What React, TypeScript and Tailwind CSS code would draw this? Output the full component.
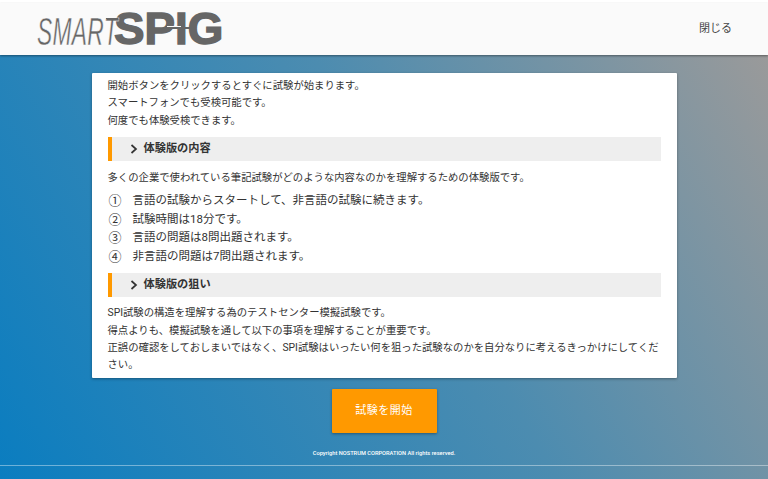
export default function App() {
  const font = { fontFamily: '"Roboto","Noto Sans CJK JP",sans-serif' };
  return (
    <div style={font} className="relative flex h-[479px] w-[768px] flex-col overflow-hidden bg-white">
      <div className="z-10 mt-[3px] flex h-[52px] shrink-0 items-center justify-between bg-[#fafafa] pl-[36px] pr-[36px] shadow-[0_1px_2px_rgba(0,0,0,0.4)]">
        <div className="relative h-[40px] w-[190px]">
          <span className="absolute left-[78px] top-[-2px] origin-left scale-x-[1.04] whitespace-nowrap text-[44px] font-bold leading-[44px] text-[#666] [font-family:'Liberation_Sans',sans-serif] [-webkit-text-stroke:1.4px_#666]">SPIG</span>
          <span className="absolute left-[1px] top-[4px] origin-left scale-x-[0.6] whitespace-nowrap text-[38px] italic leading-[38px] tracking-[0.5px] text-[#666] [font-family:'Liberation_Sans',sans-serif] [-webkit-text-stroke:0.5px_#fafafa]">SMART</span>
          <div className="absolute left-[70px] top-[9px] h-px w-[12px] bg-[#666]" />
          <div className="absolute left-[134px] top-[18px] h-[1.5px] w-[22px] bg-[#666]" />
          <div className="absolute left-[131px] top-[17px] h-px w-[14px] bg-[#fafafa]" />
        </div>
        <span className="text-[11px] text-[#444]">閉じる</span>
      </div>
      <div className="flex flex-1 flex-col items-center bg-[linear-gradient(60deg,#0a7dc0_0%,#4c8cb0_55%,#9a9a9a_100%)]">
        <div className="mt-[18px] w-[585px] rounded-[1px] bg-white px-[16px] pt-[4.2px] pb-[4.2px] text-[10.35px] leading-[17.3px] text-[#333] shadow-[0_1px_3px_rgba(0,0,0,0.35)]">
          <p>開始ボタンをクリックするとすぐに試験が始まります。</p>
          <p>スマートフォンでも受検可能です。</p>
          <p>何度でも体験受検できます。</p>
          <Heading title="体験版の内容" className="mt-[7.8px]" />
          <p className="mt-[7.7px]">多くの企業で使われている筆記試験がどのような内容なのかを理解するための体験版です。</p>
          <ol className="mt-[5.8px] text-[11.5px]">
            {[
              ["①", "言語の試験からスタートして、非言語の試験に続きます。"],
              ["②", "試験時間は18分です。"],
              ["③", "言語の問題は8問出題されます。"],
              ["④", "非言語の問題は7問出題されます。"],
            ].map(([n, t]) => (
              <li key={n} className="flex h-[18.5px] items-center">
                <span className="w-[25px] pl-[1px] text-[13px] leading-none">{n}</span>
                <span>{t}</span>
              </li>
            ))}
          </ol>
          <Heading title="体験版の狙い" className="mt-[7px]" />
          <p className="mt-[7.7px]">SPI試験の構造を理解する為のテストセンター模擬試験です。</p>
          <p>得点よりも、模擬試験を通して以下の事項を理解することが重要です。</p>
          <p>正誤の確認をしておしまいではなく、SPI試験はいったい何を狙った試験なのかを自分なりに考えるきっかけにしてください。</p>
        </div>
        <button className="mt-[11.5px] flex h-[43.5px] w-[105px] items-center justify-center rounded-[1px] bg-[#ff9900] text-[11px] tracking-[0.5px] text-white shadow-[0_1px_3px_rgba(0,0,0,0.35)]">試験を開始</button>
        <p className="mt-[16px] text-[5.7px] font-medium leading-[8px] text-white">Copyright NOSTRUM CORPORATION All rights reserved.</p>
        <div className="mt-[8px] h-px w-full bg-white/40" />
      </div>
    </div>
  );
}

function Heading({ title, className }: { title: string; className: string }) {
  return (
    <div className={`flex h-[24px] items-center border-l-[4px] border-[#ff9900] bg-[#eeeeee] pl-[18px] ${className}`}>
      <svg width="8" height="10" viewBox="0 0 8 10" className="mr-[6px]">
        <path d="M1.5 1 L6 5 L1.5 9" fill="none" stroke="#333" strokeWidth="1.7" />
      </svg>
      <span className="text-[11.2px] font-bold text-[#333]">{title}</span>
    </div>
  );
}
